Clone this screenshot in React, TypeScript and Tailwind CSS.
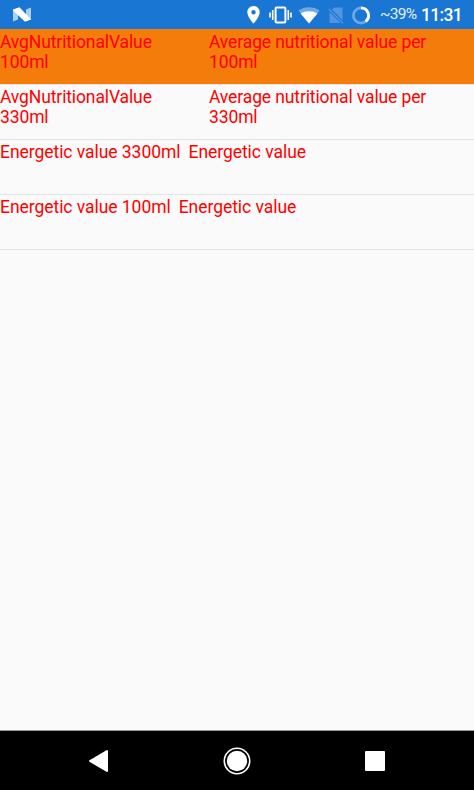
type Row = {
  name: string;
  description: string;
  wide?: boolean;
  selected?: boolean;
};

const ROWS: Row[] = [
  { name: 'AvgNutritionalValue 100ml', description: 'Average nutritional value per 100ml', wide: true, selected: true },
  { name: 'AvgNutritionalValue 330ml', description: 'Average nutritional value per 330ml', wide: true },
  { name: 'Energetic value 3300ml', description: 'Energetic value' },
  { name: 'Energetic value 100ml', description: 'Energetic value' },
];

// ─── Status bar ───────────────────────────────────────────────────────────────
function NougatIcon() {
  return (
    <svg className="ml-[13px] h-[15px] w-[18px]" viewBox="0 0 18 15">
      <path d="M0 3L5 1V12.5L0 14.5Z" fill="#a9d0f7" />
      <path d="M13 2.5L18 .5V12.5L13 14Z" fill="#a9d0f7" />
      <path d="M0 2.5L6.5 .3L18 12.5L12 14.8L0 3.5Z" fill="#fff" />
    </svg>
  );
}

function StatusIcons() {
  return (
    <>
      <svg className="h-[18px] w-[13px]" viewBox="0 0 13 18">
        <path
          fillRule="evenodd"
          d="M6.5 0A6.2 6.2 0 0 0 .3 6.2C.3 10.8 6.5 17.6 6.5 17.6S12.7 10.8 12.7 6.2A6.2 6.2 0 0 0 6.5 0ZM6.5 4A2.2 2.2 0 1 1 6.5 8.4A2.2 2.2 0 1 1 6.5 4Z"
          fill="#fff"
        />
      </svg>
      <svg className="ml-[9px] h-[18px] w-[23px]" viewBox="0 0 23 18" fill="none" stroke="#fff">
        <rect x="6.6" y="1.6" width="9.8" height="14.8" rx="1" strokeWidth="2" />
        <path d="M3.7 4V14M19.3 4V14" strokeWidth="1.6" />
        <path d="M1 6.5V11.5M22 6.5V11.5" strokeWidth="1.6" />
      </svg>
      <svg className="ml-[6px] h-[17px] w-[22px]" viewBox="0 0 22 17">
        <path d="M11 16.5L.3 3.5C6.5-1 15.5-1 21.7 3.5Z" fill="#6fa9e6" />
        <path d="M11 16.5L2.6 6.6C7.5 3.4 14.5 3.4 19.4 6.6Z" fill="#fff" />
      </svg>
      <svg className="ml-[8px] h-[17px] w-[16px]" viewBox="0 0 16 17">
        <path d="M6 .5H13.500Q14.5 .5 14.5 1.5V13.2L4 2.5Z" fill="#5396df" />
        <path d="M1.5 5L12.5 16H2.5Q1.500 16 1.5 15Z" fill="#5396df" />
        <path d="M.8 2L15 16.2" stroke="#5396df" strokeWidth="1.3" />
      </svg>
      <svg className="ml-[8px] h-[19px] w-[19px]" viewBox="0 0 19 19" fill="none" strokeWidth="2.8">
        <circle cx="9" cy="9.5" r="7.6" stroke="#6fa9e6" />
        <path d="M9 1.9A7.6 7.6 0 0 1 13.6 15.5" stroke="#fff" />
      </svg>
    </>
  );
}

function StatusBar() {
  return (
    <header className="flex h-[29px] shrink-0 items-center bg-[#1976d2] pr-[10px] text-white">
      <NougatIcon />
      <div className="ml-auto flex h-full items-center pt-px">
        <StatusIcons />
        <span className="ml-[9px] w-[41px] text-[15.5px] tracking-[-0.7px] text-[#e4effb]">~39%</span>
        <span className="w-[43px] text-[17.5px] font-medium tracking-[-0.7px]">11:31</span>
      </div>
    </header>
  );
}

// ─── List ─────────────────────────────────────────────────────────────────────
function ListRow({ name, description, wide, selected }: Row) {
  return (
    <li
      className={`flex gap-2 border-b border-[#e5e5e5] ${
        selected ? 'h-14 bg-[#f37c0b] pt-[3px]' : 'h-[55px] pt-0.5'
      } ${wide ? 'tracking-[-0.12px]' : 'tracking-[-0.05px]'}`}
    >
      <span className={wide ? 'w-[201px] shrink-0 pr-8' : 'shrink-0'}>{name}</span>
      <span className="max-w-[240px]">{description}</span>
    </li>
  );
}

// ─── Navigation bar ───────────────────────────────────────────────────────────
function NavBar() {
  return (
    <nav className="flex h-[60px] shrink-0 items-center border-t border-[#999] bg-black pl-[88px]">
      <svg className="h-[24px] w-[21px]" viewBox="0 0 21 24">
        <path d="M2 12L19 2V22Z" fill="#fff" stroke="#fff" strokeWidth="2" strokeLinejoin="round" />
      </svg>
      <svg className="ml-[114px] h-[28px] w-[28px]" viewBox="0 0 28 28">
        <circle cx="14" cy="14" r="12.7" fill="none" stroke="#fff" strokeWidth="1.6" />
        <circle cx="14" cy="14" r="10.2" fill="#fff" />
      </svg>
      <div className="ml-[114px] size-[20px] rounded-[1px] bg-white" />
    </nav>
  );
}

export default function App() {
  return (
    <div className="flex h-screen flex-col overflow-hidden bg-[#fafafa] font-['Roboto',sans-serif]">
      <StatusBar />
      <ul className="flex-1 text-[17.5px] leading-5 text-[#ff0000]">
        {ROWS.map((row) => (
          <ListRow key={row.name} {...row} />
        ))}
      </ul>
      <NavBar />
    </div>
  );
}
